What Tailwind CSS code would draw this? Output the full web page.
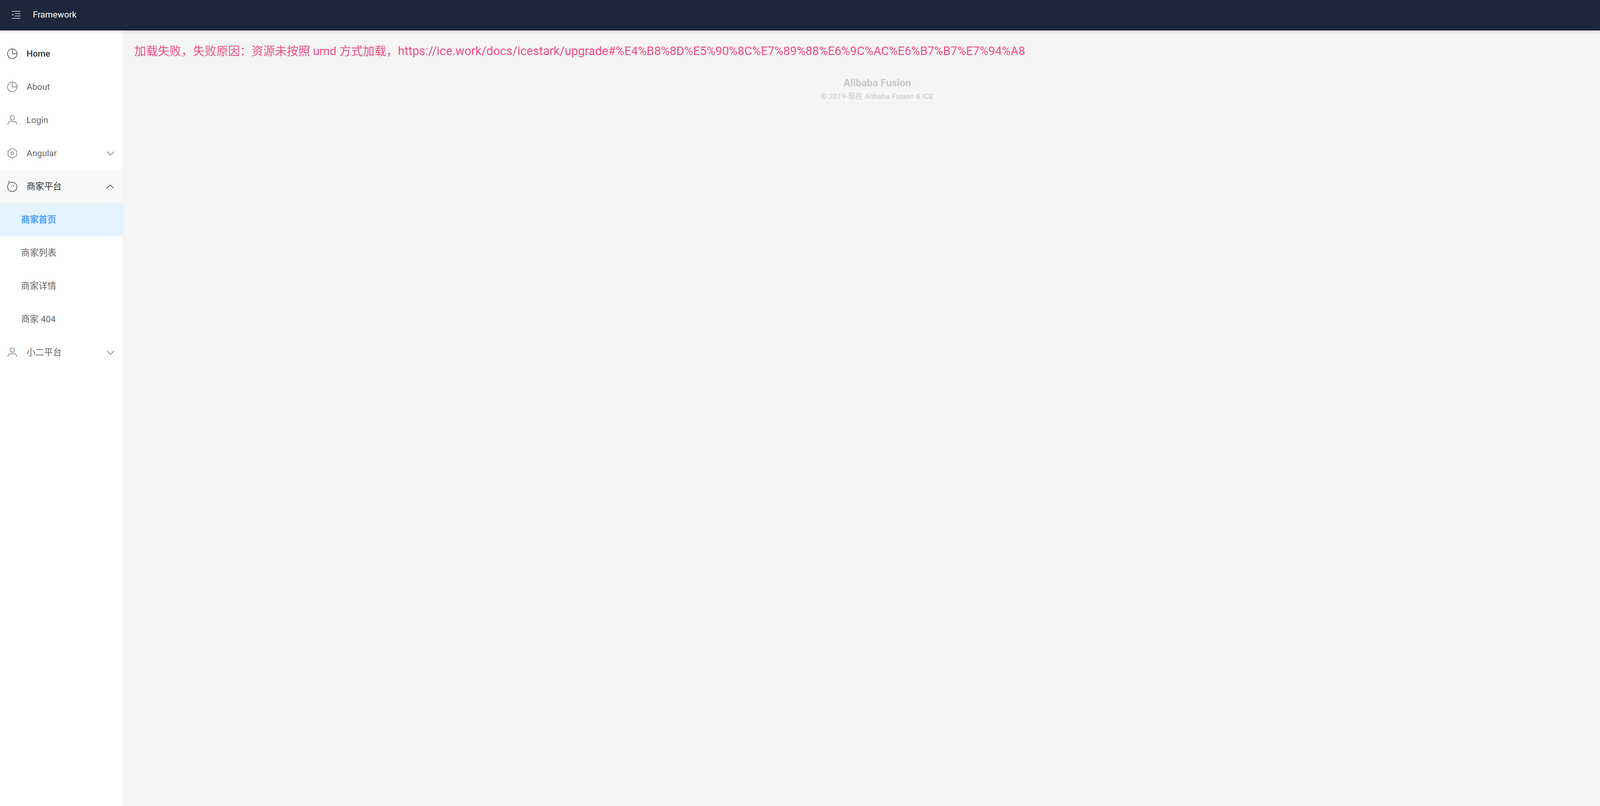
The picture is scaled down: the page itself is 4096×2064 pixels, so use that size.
<!DOCTYPE html>
<html lang="zh">
<head>
  <meta charset="UTF-8" />
  <title>Framework</title>
  <script src="https://cdn.jsdelivr.net/npm/@tailwindcss/browser@4"></script>
</head>
<body class="h-screen overflow-hidden bg-[#f5f5f5] font-['Roboto','Noto_Sans_CJK_SC',sans-serif] text-[22.5px]">

  <!-- top bar -->
  <header class="relative z-10 flex h-[78px] items-center bg-[#1c273b] pb-[2px] pl-[29px] text-white shadow-[0_3px_8px_rgba(0,0,0,0.12)]">
    <svg class="h-[22px] w-[24px]" viewBox="0 0 24 22" fill="none" stroke="#e8eaee" stroke-width="1.6">
      <path d="M1 2h22M9 8h14M9 14h14M1 20h22" />
      <path d="M5 8.5v5l-3.5-2.5z" fill="#e8eaee" stroke="none" />
    </svg>
    <span class="ml-[31px]">Framework</span>
  </header>

  <div class="flex h-[calc(100vh-78px)]">
    <!-- sidebar -->
    <nav class="w-[316px] shrink-0 border-r-[2px] border-[#f0f0f0] bg-white pt-[17px] text-[#666666]">
      <a class="flex h-[85px] items-center pl-[18px] font-medium text-[#333333]">
        <svg class="h-[27px] w-[27px]" viewBox="0 0 27 27" fill="none" stroke="currentColor" stroke-width="1.4">
          <circle cx="13.5" cy="13.5" r="12.3" />
          <path d="M13.5 1.2v12.3h12.3" />
        </svg>
        <span class="ml-[23px]">Home</span>
      </a>
      <a class="flex h-[85px] items-center pl-[18px]">
        <svg class="h-[27px] w-[27px]" viewBox="0 0 27 27" fill="none" stroke="currentColor" stroke-width="1.4">
          <circle cx="13.5" cy="13.5" r="12.3" />
          <path d="M13.5 1.2v12.3h12.3" />
        </svg>
        <span class="ml-[23px]">About</span>
      </a>
      <a class="flex h-[85px] items-center pl-[18px]">
        <svg class="h-[27px] w-[27px]" viewBox="0 0 27 27" fill="none" stroke="currentColor" stroke-width="1.4">
          <circle cx="13.5" cy="7.5" r="5.6" />
          <path d="M2.4 25v-1.5c0-4 3-6.7 7-6.7h8.2c4 0 7 2.7 7 6.7V25" />
        </svg>
        <span class="ml-[23px]">Login</span>
      </a>
      <a class="flex h-[85px] items-center pl-[18px]">
        <svg class="h-[27px] w-[27px]" viewBox="0 0 27 27" fill="none" stroke="currentColor" stroke-width="1.4">
          <path d="M13.5 1l11 6.3v12.4l-11 6.3-11-6.3V7.3z" />
          <circle cx="13.5" cy="13.5" r="3.4" />
        </svg>
        <span class="ml-[23px]">Angular</span>
        <svg class="ml-auto mr-[21px] h-[12px] w-[20px]" viewBox="0 0 20 12" fill="none" stroke="currentColor" stroke-width="1.5">
          <path d="M1 1.5l9 9 9-9" />
        </svg>
      </a>
      <a class="flex h-[85px] items-center bg-[#f8f8f8] pl-[18px] text-[#333333]">
        <svg class="h-[27px] w-[27px]" viewBox="0 0 27 27" fill="none" stroke="currentColor" stroke-width="1.4">
          <path d="M4.8 1.2l.8 4.2a12 12 0 1 0 4.2-2.3z" />
          <path d="M12 11v3M17 11v3" />
        </svg>
        <span class="ml-[23px]">商家平台</span>
        <svg class="ml-auto mr-[22px] h-[12px] w-[20px]" viewBox="0 0 20 12" fill="none" stroke="currentColor" stroke-width="1.5">
          <path d="M1 10.5l9-9 9 9" />
        </svg>
      </a>
      <a class="flex h-[85px] items-center bg-[#e4f3fe] pl-[54px] font-semibold text-[#4a9ff5]">商家首页</a>
      <a class="flex h-[85px] items-center pl-[54px]">商家列表</a>
      <a class="flex h-[85px] items-center pl-[54px]">商家详情</a>
      <a class="flex h-[85px] items-center pl-[54px]">商家 404</a>
      <a class="flex h-[85px] items-center pl-[18px]">
        <svg class="h-[27px] w-[27px]" viewBox="0 0 27 27" fill="none" stroke="currentColor" stroke-width="1.4">
          <circle cx="13.5" cy="7.5" r="5.6" />
          <path d="M2.4 25v-1.5c0-4 3-6.7 7-6.7h8.2c4 0 7 2.7 7 6.7V25" />
        </svg>
        <span class="ml-[23px]">小二平台</span>
        <svg class="ml-auto mr-[21px] h-[12px] w-[20px]" viewBox="0 0 20 12" fill="none" stroke="currentColor" stroke-width="1.5">
          <path d="M1 1.5l9 9 9-9" />
        </svg>
      </a>
    </nav>

    <!-- content -->
    <main class="min-w-0 flex-1 pl-[28px] pt-[36px]">
      <div class="text-[30px] leading-[34px] text-[#ef4f86] whitespace-nowrap">加载失败，失败原因：资源未按照 umd 方式加载，<span class="text-[30.7px]">https://ice.work/docs/icestark/upgrade#%E4%B8%8D%E5%90%8C%E7%89%88%E6%9C%AC%E6%B7%B7%E7%94%A8</span></div>
      <footer class="mt-[47px] pl-[52px] text-center text-[#c8c8c8]">
        <p class="text-[26px] font-bold leading-[34px]">Alibaba Fusion</p>
        <p class="text-[19.2px] leading-[36px]">© 2019-现在 Alibaba Fusion &amp; ICE</p>
      </footer>
    </main>
  </div>
</body>
</html>
